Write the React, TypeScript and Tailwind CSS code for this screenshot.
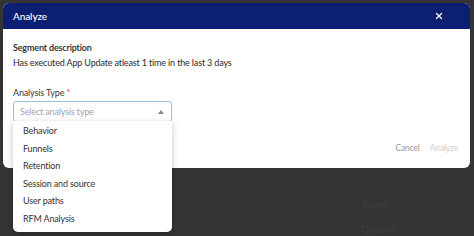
import { X } from "lucide-react";

const OPTIONS = ["Behavior", "Funnels", "Retention", "Session and source", "User paths", "RFM Analysis"];

export default function App() {
  return (
    <div className="relative h-[236px] w-[474px] overflow-hidden bg-[#343434] font-['Lato',sans-serif]">
      {/* faint page behind overlay */}
      <div className="absolute left-[362px] top-[198px] text-[9px] text-[#3f3f3f]">Stored</div>
      <div className="absolute left-[362px] top-[225px] text-[9px] leading-[10px] text-[#3f3f3f]">Disabled</div>

      <div className="absolute left-[3px] top-[3px] w-[467px] overflow-hidden rounded-[6px] bg-white">
        <div className="flex h-[26px] items-center justify-between bg-[#0c1f72] pl-[10px] pr-[26px]">
          <span className="text-[10px] font-medium tracking-[-0.1px] text-white">Analyze</span>
          <X size={10} strokeWidth={3} className="text-white" />
        </div>
        <div className="px-[10px] pt-[12px] pb-[13px] tracking-[-0.15px]">
          <div className="text-[9px] font-semibold leading-[14px] text-[#222]">Segment description</div>
          <div className="mt-[1px] text-[9px] leading-[14px] text-[#2a2a2a]">
            Has executed App Update atleast 1 time in the last 3 days
          </div>
          <div className="mt-[16px] text-[9px] leading-[14px] text-[#3a3a3a]">
            Analysis Type <span className="text-[#e0455f]">*</span>
          </div>
          <div className="mt-[1px] flex h-[21px] w-[159px] items-center justify-between rounded-[3px] border border-[#9cc0d8] px-[6px]">
            <span className="text-[9px] text-[#a4a4a4]">Select analysis type</span>
            <svg width="6" height="4" viewBox="0 0 6 4" className="mr-[1px]">
              <path d="M0 4 L3 0 L6 4 Z" fill="#888" />
            </svg>
          </div>
          <div className="mt-[20px] flex justify-end gap-[10px] pr-[2px] text-[8.5px]">
            <span className="text-[#9a9a9a]">Cancel</span>
            <span className="text-[#cfcfcf]">Analyze</span>
          </div>
        </div>
      </div>

      <div className="absolute left-[13px] top-[121px] w-[159px] rounded-b-[5px] bg-white pt-[1px] pb-[4px] shadow-[0_2px_6px_rgba(0,0,0,0.25)]">
        {OPTIONS.map((o) => (
          <div key={o} className="flex h-[17.6px] items-center px-[10px] text-[9px] tracking-[-0.15px] text-[#333]">
            {o}
          </div>
        ))}
      </div>
    </div>
  );
}
